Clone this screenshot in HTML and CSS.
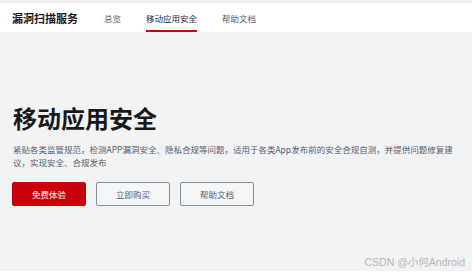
FILE: index.html
```html
<!DOCTYPE html>
<html lang="zh-CN">

<head>
    <meta charset="UTF-8">
    <meta name="viewport" content="width=device-width, initial-scale=1.0">
    <title>移动应用安全</title>
    <link rel="stylesheet" href="styles.css">
</head>

<body>
    <div class="page">
        <header class="topbar">
            <div class="brand">漏洞扫描服务</div>
            <nav class="nav">
                <a class="nav-item">总览</a>
                <a class="nav-item active">移动应用安全</a>
                <a class="nav-item">帮助文档</a>
            </nav>
        </header>

        <section class="hero">
            <h1>移动应用安全</h1>
            <p class="desc">紧贴各类监管规范，检测APP漏洞安全、隐私合规等问题，适用于各类App发布前的安全合规自测，并提供问题修复建议，实现安全、合规发布</p>
            <div class="actions">
                <button class="btn primary">免费体验</button>
                <button class="btn">立即购买</button>
                <button class="btn">帮助文档</button>
            </div>
            <div class="watermark">CSDN @小何Android</div>
        </section>
    </div>
</body>

</html>
```

FILE: styles.css
```css
body {
    margin: 0;
    font-family: "Noto Sans CJK SC", "Noto Sans", sans-serif;
    background: #ffffff;
    color: #252b3a;
}

.page {
    width: 472px;
    height: 275px;
    border-top: 3px solid #eceef1;
    box-sizing: border-box;
    display: flex;
    flex-direction: column;
}

.topbar {
    height: 29px;
    display: flex;
    align-items: stretch;
    padding-left: 12px;
    background: #fff;
}

.brand {
    display: flex;
    align-items: center;
    font-size: 11px;
    font-weight: 700;
    color: #191919;
    width: 92px;
}

.nav {
    display: flex;
    gap: 25px;
}

.nav-item {
    display: flex;
    align-items: center;
    font-size: 8.5px;
    color: #575d6c;
    border-bottom: 2px solid transparent;
    padding-top: 2px;
}

.nav-item.active {
    color: #252b3a;
    border-bottom-color: #c7000b;
}

.hero {
    flex: 1;
    position: relative;
    background: #f2f3f5;
    padding: 70px 12px 0 13px;
    margin-bottom: 4px;
}

h1 {
    margin: 0;
    font-size: 24px;
    line-height: 32px;
    font-weight: 700;
    color: #191919;
}

.desc {
    margin: 9px 0 0;
    width: 444px;
    font-size: 8.5px;
    line-height: 13px;
    color: #575d6c;
}

.actions {
    display: flex;
    gap: 10px;
    margin-top: 13px;
    margin-left: -1px;
}

.btn {
    width: 74px;
    height: 24px;
    box-sizing: border-box;
    font-family: inherit;
    font-size: 8.5px;
    color: #575d6c;
    background: #f5f6f7;
    border: 1px solid #8a8e99;
    border-radius: 2px;
    padding: 0;
}

.btn.primary {
    background: #c7000b;
    border-color: #c7000b;
    color: #fff;
}

.watermark {
    position: absolute;
    right: 7px;
    bottom: 2px;
    font-family: "Liberation Sans", "Noto Sans CJK SC", sans-serif;
    font-size: 10.5px;
    color: #b4b6ba;
}
```
